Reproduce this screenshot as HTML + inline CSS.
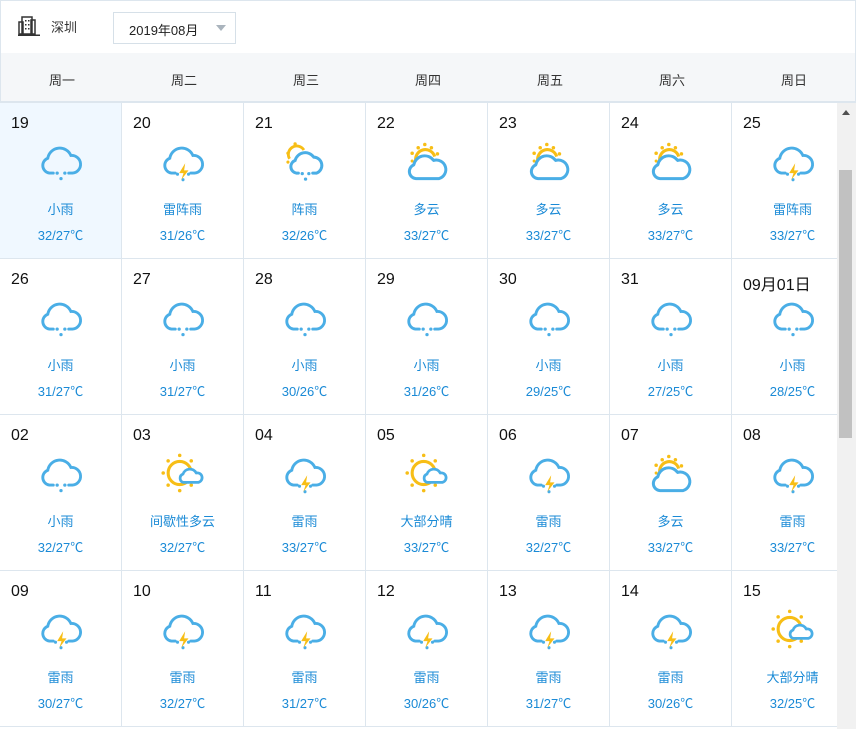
<!DOCTYPE html>
<html><head><meta charset="utf-8"><style>
*{margin:0;padding:0;box-sizing:border-box}
body{width:856px;height:729px;overflow:hidden;background:#fff;font-family:"Liberation Sans","Noto Sans CJK SC",sans-serif;position:relative}
.top{position:absolute;left:0;top:0;width:856px;height:54px;border:1px solid #dde6ee}
.city{position:absolute;left:50px;top:16px;font-size:13px;color:#333}
.sel{position:absolute;left:112px;top:11px;width:123px;height:32px;border:1px solid #d6e0e8;font-size:13px;color:#222;padding:7px 0 0 15px}
.sel:after{content:"";position:absolute;left:102px;top:12px;border:5px solid transparent;border-top:6px solid #aab4bd}
.wk{position:absolute;left:0;top:53px;width:856px;height:50px;background:#f5f7f9;border:1px solid #dde6ee;border-top:none;border-bottom:2px solid #dde6ee}
.wk span{position:absolute;top:17px;width:122px;text-align:center;font-size:13px;color:#333}
.cell{position:absolute;width:122px;height:156px;border-right:1px solid #dde6ee;border-bottom:1px solid #dde6ee}
.cell .d{position:absolute;left:11px;top:12px;font-size:16px;color:#111}
.cell svg{position:absolute;left:39px;top:36px}
.cell .t{position:absolute;left:0;width:121px;text-align:center;top:96px;font-size:13px;color:#1a8ad6}
.cell .p{position:absolute;left:0;width:121px;text-align:center;top:122px;font-size:13px;color:#1a8ad6}
.sb{position:absolute;left:837px;top:103px;width:19px;height:626px;background:#f1f1f1}
.sb:before{content:"";position:absolute;left:5px;top:7px;border:4px solid transparent;border-bottom:5px solid #505050;border-top:none}
.sb:after{content:"";position:absolute;left:2px;top:67px;width:13px;height:268px;background:#c1c1c1}
</style></head><body>
<svg width="0" height="0" style="position:absolute">
<defs>
<symbol id="cl" viewBox="0 0 40 40"><path d="M13 31H9.5A7 7 0 0 1 8 17.5A11 11 0 0 1 29 15A8 8 0 0 1 30.5 31H27" fill="none" stroke="#4aaee6" stroke-width="2.6" stroke-linecap="round"/></symbol>
<symbol id="dr" viewBox="0 0 40 40"><g fill="#4aaee6"><circle cx="16.5" cy="31" r="1.5"/><circle cx="23.5" cy="31" r="1.5"/><circle cx="20" cy="36" r="1.5"/></g></symbol>
<symbol id="bt" viewBox="0 0 40 40"><g fill="#4aaee6"><circle cx="15" cy="32" r="1.4"/><circle cx="25" cy="32" r="1.4"/><circle cx="20" cy="37" r="1.4"/></g><path d="M22 22L16.5 31H20.5L18.5 37L25 28.5H21Z" fill="#f7be16"/></symbol>
<symbol id="dy" viewBox="0 0 40 40"><g fill="#f7be16"><circle cx="12" cy="8" r="1.6"/><circle cx="24" cy="8" r="1.6"/><circle cx="6.5" cy="13" r="1.6"/><circle cx="29.5" cy="13.5" r="1.6"/><circle cx="18" cy="5" r="1.6"/><circle cx="6.5" cy="20" r="1.4"/></g><path d="M10 21A8.5 8.5 0 0 1 27 16" fill="none" stroke="#f7be16" stroke-width="2.8"/><path d="M10 36A6.5 6.5 0 0 1 8 23.5A10 10 0 0 1 26 19.5A8 8 0 0 1 31 36Z" fill="#fff" stroke="#4aaee6" stroke-width="2.7" stroke-linejoin="round"/></symbol>
<symbol id="zy" viewBox="0 0 40 40"><g fill="#f7be16"><circle cx="17" cy="4" r="1.6"/><circle cx="17" cy="36" r="1.6"/><circle cx="2" cy="20" r="1.6"/><circle cx="6.5" cy="9" r="1.6"/><circle cx="27.5" cy="9" r="1.6"/><circle cx="6.5" cy="31" r="1.6"/><circle cx="27.5" cy="31" r="1.6"/></g><circle cx="17" cy="20" r="10.5" fill="none" stroke="#f7be16" stroke-width="2.8"/><path d="M20 28.5A4 4 0 0 1 20 21A6.5 6.5 0 0 1 32 20A4.3 4.3 0 0 1 34 28.5Z" fill="#fff" stroke="#4aaee6" stroke-width="2.5" stroke-linejoin="round"/></symbol>
<symbol id="zr" viewBox="0 0 40 40"><g fill="#f7be16"><circle cx="4.5" cy="13" r="1.5"/><circle cx="11" cy="4.5" r="1.5"/><circle cx="4.5" cy="21" r="1.4"/></g><path d="M6 18A7.5 7.5 0 0 1 19 10" fill="none" stroke="#f7be16" stroke-width="2.6"/><path d="M14 31H12A6 6 0 0 1 11 19.5A9.5 9.5 0 0 1 28 16.5A7.5 7.5 0 0 1 30.5 31H27" fill="none" stroke="#4aaee6" stroke-width="2.7" stroke-linecap="round"/><g fill="#4aaee6"><circle cx="17.5" cy="31.5" r="1.5"/><circle cx="23.5" cy="31.5" r="1.5"/><circle cx="20.5" cy="36.5" r="1.5"/></g></symbol>
</defs></svg>
<div class="top"><svg style="position:absolute;left:17px;top:15px" width="22" height="20" viewBox="0 0 22 20"><rect x="4" y="1" width="10" height="17" fill="none" stroke="#333" stroke-width="1.5"/><rect x="1" y="6" width="4" height="12" fill="none" stroke="#333" stroke-width="1.5"/><rect x="13" y="4" width="4" height="14" fill="none" stroke="#333" stroke-width="1.5"/><g fill="#333"><rect x="7" y="4" width="1.5" height="1.5"/><rect x="10" y="4" width="1.5" height="1.5"/><rect x="7" y="8" width="1.5" height="1.5"/><rect x="10" y="8" width="1.5" height="1.5"/><rect x="7" y="12" width="1.5" height="1.5"/><rect x="10" y="12" width="1.5" height="1.5"/></g><rect x="0" y="18.5" width="22" height="1.5" fill="#333"/></svg>
<span class="city">深圳</span><div class="sel">2019年08月</div></div>
<div class="wk"><span style="left:0">周一</span><span style="left:122px">周二</span><span style="left:244px">周三</span><span style="left:366px">周四</span><span style="left:488px">周五</span><span style="left:610px">周六</span><span style="left:732px">周日</span></div>
<div id="g"></div>
<div class="sb"></div>
<script>
var S={r:['cl','dr'],t:['cl','bt'],z:['zr'],c:['dy'],m:['zy']};
var D=[
['19','r','小雨','32/27'],['20','t','雷阵雨','31/26'],['21','z','阵雨','32/26'],['22','c','多云','33/27'],['23','c','多云','33/27'],['24','c','多云','33/27'],['25','t','雷阵雨','33/27'],
['26','r','小雨','31/27'],['27','r','小雨','31/27'],['28','r','小雨','30/26'],['29','r','小雨','31/26'],['30','r','小雨','29/25'],['31','r','小雨','27/25'],['09月01日','r','小雨','28/25'],
['02','r','小雨','32/27'],['03','m','间歇性多云','32/27'],['04','t','雷雨','33/27'],['05','m','大部分晴','33/27'],['06','t','雷雨','32/27'],['07','c','多云','33/27'],['08','t','雷雨','33/27'],
['09','t','雷雨','30/27'],['10','t','雷雨','32/27'],['11','t','雷雨','31/27'],['12','t','雷雨','30/26'],['13','t','雷雨','31/27'],['14','t','雷雨','30/26'],['15','m','大部分晴','32/25']];
var h='';
D.forEach(function(x,i){var c=i%7,r=Math.floor(i/7);
var u=S[x[1]].map(function(s){return '<use href="#'+s+'" width="44" height="44"/>'}).join('');
h+='<div class="cell" style="left:'+(c*122)+'px;top:'+(103+r*156)+'px;'+(i==0?'background:#f0f8ff;':'')+'"><span class="d">'+x[0]+'</span><svg width="44" height="44" viewBox="0 0 44 44">'+u+'</svg><div class="t">'+x[2]+'</div><div class="p">'+x[3]+'℃</div></div>';});
document.getElementById('g').innerHTML=h;
</script>
</body></html>
